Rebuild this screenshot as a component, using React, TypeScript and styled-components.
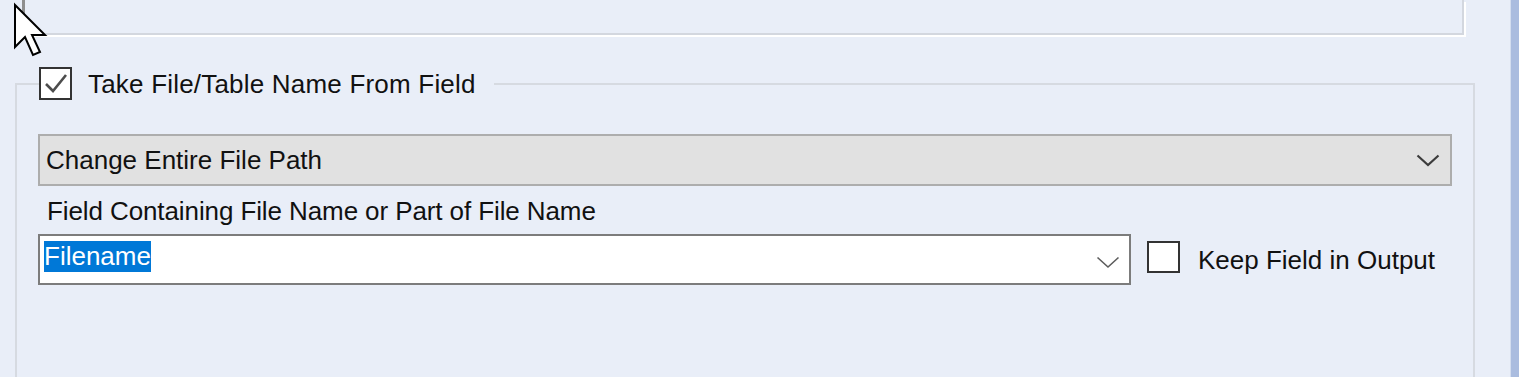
import React from 'react';
import styled, { createGlobalStyle } from 'styled-components';

const GlobalStyle = createGlobalStyle`
	html, body {
		margin: 0;
		padding: 0;
		background: #e9eef8;
	}
	body {
		font-family: 'Liberation Sans', Arial, sans-serif;
		color: #111;
	}
`;

const Page = styled.div`
	position: relative;
	display: flex;
	flex-direction: row;
	width: 1519px;
	height: 377px;
	overflow: hidden;
	background: #e9eef8;
`;

const Content = styled.div`
	flex: 1;
	display: flex;
	flex-direction: column;
	min-height: 0;
`;

const SideBar = styled.div`
	width: 8px;
	border-left: 1px solid #d3ddef;
	background: #aabcdf;
`;

const TopPanel = styled.div`
	flex: none;
	box-sizing: border-box;
	margin-left: 22px;
	width: 1442px;
	height: 35px;
	border: 2px solid #d3d7df;
	border-top: none;
	border-left: 3px solid #8f8f8f;
	box-shadow: 2px 2px 0 #ffffff;
`;

const GroupBox = styled.fieldset`
	flex: none;
	box-sizing: border-box;
	margin: 32px 0 0 15px;
	width: 1460px;
	height: 320px;
	padding: 34px 21px 0 21px;
	border: 2px solid #d6dae1;
`;

const Legend = styled.legend`
	display: flex;
	align-items: center;
	gap: 16px;
	margin-left: 1px;
	padding: 0 18px 0 0;
	font-size: 26px;
	line-height: 30px;
	letter-spacing: 0.2px;
`;

const Box = styled.span`
	box-sizing: border-box;
	display: flex;
	align-items: center;
	justify-content: center;
	flex: none;
	width: 33px;
	height: 33px;
	border: 2px solid #333;
	background: #fff;
`;

const Select = styled.div<{ $editable?: boolean }>`
	box-sizing: border-box;
	display: flex;
	align-items: ${(p) => (p.$editable ? 'flex-start' : 'center')};
	justify-content: space-between;
	flex: none;
	height: ${(p) => (p.$editable ? '51px' : '52px')};
	width: ${(p) => (p.$editable ? '1093px' : '100%')};
	padding: ${(p) => (p.$editable ? '5px 0 0 4px' : '0 0 0 6px')};
	background: ${(p) => (p.$editable ? '#ffffff' : '#e1e1e1')};
	border: 2px solid ${(p) => (p.$editable ? '#7c7c7c' : '#adadad')};
	font-size: 26px;
	line-height: 30px;
`;

const Chevron = styled.svg<{ $editable?: boolean }>`
	flex: none;
	width: 24px;
	height: 13px;
	margin-right: ${(p) => (p.$editable ? '9px' : '10px')};
	align-self: center;
`;

const Selected = styled.span`
	background: #0078d7;
	color: #fff;
	line-height: 31px;
`;

const Label = styled.div`
	margin: 10px 0 0 9px;
	font-size: 26px;
	line-height: 30px;
	letter-spacing: -0.1px;
`;

const Row = styled.div`
	display: flex;
	align-items: center;
	margin-top: 8px;
`;

const KeepBox = styled(Box)`
	margin: 0 0 6px 16px;
	height: 32px;
`;

const KeepText = styled.span`
	margin-left: 18px;
	font-size: 26px;
	line-height: 30px;
`;

const Cursor = styled.svg`
	position: absolute;
	left: 14px;
	top: 4px;
	width: 36px;
	height: 54px;
	overflow: visible;
`;

const ChevronIcon = ({ editable }: { editable?: boolean }) => (
	<Chevron $editable={editable} viewBox="0 0 24 13">
		<polyline
			points="1.5,1.5 12,11 22.5,1.5"
			fill="none"
			stroke={editable ? '#5c5c5c' : '#3c3c3c'}
			strokeWidth={editable ? 1.6 : 2.2}
		/>
	</Chevron>
);

export default function App() {
	return (
		<Page>
			<GlobalStyle />
			<Content>
				<TopPanel />
				<GroupBox>
					<Legend>
						<Box>
							<svg width="29" height="29" viewBox="0 0 29 29">
								<polyline
									points="5,15 12,22 25,6"
									fill="none"
									stroke="#4d4d4d"
									strokeWidth="2.6"
								/>
							</svg>
						</Box>
						Take File/Table Name From Field
					</Legend>
					<Select>
						Change Entire File Path
						<ChevronIcon />
					</Select>
					<Label>Field Containing File Name or Part of File Name</Label>
					<Row>
						<Select $editable>
							<Selected>Filename</Selected>
							<ChevronIcon editable />
						</Select>
						<KeepBox />
						<KeepText>Keep Field in Output</KeepText>
					</Row>
				</GroupBox>
			</Content>
			<SideBar />
			<Cursor viewBox="0 0 36 54">
				<polygon
					points="1,1 1,43 11,33 19,51 26,48 18,31 31,31"
					fill="#fff"
					stroke="#000"
					strokeWidth="2"
					strokeLinejoin="miter"
				/>
			</Cursor>
		</Page>
	);
}
